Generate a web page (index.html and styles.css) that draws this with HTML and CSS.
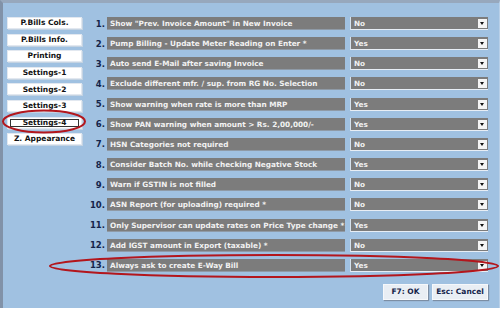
FILE: index.html
```html
<!DOCTYPE html>
<html>
<head>
<meta charset="utf-8">
<link rel="stylesheet" href="styles.css">
</head>
<body>
<div class="window">
  <div class="content">
    <div class="sidebar">
      <div class="tab">P.Bills Cols.</div>
      <div class="tab">P.Bills Info.</div>
      <div class="tab">Printing</div>
      <div class="tab">Settings-1</div>
      <div class="tab">Settings-2</div>
      <div class="tab">Settings-3</div>
      <div class="tab active"><span class="focus">Settings-4</span></div>
      <div class="tab">Z. Appearance</div>
    </div>
    <div class="main">
      <div class="rows">
        <div class="row"><span class="num">1.</span><span class="label">Show "Prev. Invoice Amount" in New Invoice</span><span class="select">No<i class="arrow"></i></span></div>
        <div class="row"><span class="num">2.</span><span class="label">Pump Billing - Update Meter Reading on Enter *</span><span class="select">Yes<i class="arrow"></i></span></div>
        <div class="row"><span class="num">3.</span><span class="label">Auto send E-Mail after saving Invoice</span><span class="select">No<i class="arrow"></i></span></div>
        <div class="row"><span class="num">4.</span><span class="label">Exclude different mfr. / sup. from RG No. Selection</span><span class="select">No<i class="arrow"></i></span></div>
        <div class="row"><span class="num">5.</span><span class="label">Show warning when rate is more than MRP</span><span class="select">Yes<i class="arrow"></i></span></div>
        <div class="row"><span class="num">6.</span><span class="label">Show PAN warning when amount &gt; Rs. 2,00,000/-</span><span class="select">Yes<i class="arrow"></i></span></div>
        <div class="row"><span class="num">7.</span><span class="label">HSN Categories not required</span><span class="select">No<i class="arrow"></i></span></div>
        <div class="row"><span class="num">8.</span><span class="label">Consider Batch No. while checking Negative Stock</span><span class="select">Yes<i class="arrow"></i></span></div>
        <div class="row"><span class="num">9.</span><span class="label">Warn if GSTIN is not filled</span><span class="select">No<i class="arrow"></i></span></div>
        <div class="row"><span class="num">10.</span><span class="label">ASN Report (for uploading) required *</span><span class="select">No<i class="arrow"></i></span></div>
        <div class="row"><span class="num">11.</span><span class="label">Only Supervisor can update rates on Price Type change *</span><span class="select">Yes<i class="arrow"></i></span></div>
        <div class="row"><span class="num">12.</span><span class="label">Add IGST amount in Export (taxable) *</span><span class="select">No<i class="arrow"></i></span></div>
        <div class="row"><span class="num">13.</span><span class="label">Always ask to create E-Way Bill</span><span class="select">Yes<i class="arrow"></i></span></div>
      </div>
      <div class="actions">
        <div class="btn ok">F7: OK</div>
        <div class="btn cancel">Esc: Cancel</div>
      </div>
    </div>
  </div>
  <svg class="mark" width="500" height="313" viewBox="0 0 500 313">
    <ellipse cx="44" cy="121.5" rx="41" ry="11" fill="none" stroke="#b3161c" stroke-width="2"/>
    <ellipse cx="274" cy="266" rx="224" ry="11" fill="none" stroke="#b3161c" stroke-width="2"/>
  </svg>
</div>
</body>
</html>
```
FILE: styles.css
```css
* { box-sizing: border-box; }
html, body { margin: 0; padding: 0; }
body {
  width: 500px;
  height: 313px;
  background: #ffffff;
  font-family: "DejaVu Sans", Verdana, sans-serif;
  overflow: hidden;
}
.window {
  position: relative;
  width: 500px;
  height: 308px;
  background: #a0c1e1;
  border-left: 3px solid #8192a8;
  border-top: 3px solid #97a8bd;
  border-right: 1px solid #b9d0e8;
}
.content {
  display: flex;
  padding-top: 14px;
}
.sidebar {
  width: 84px;
  padding-left: 4px;
  display: flex;
  flex-direction: column;
  gap: 4.6px;
}
.tab {
  width: 75px;
  height: 12px;
  background: #ffffff;
  border: 1px solid #e2e8f0;
  box-shadow: 1px 1px 0 #c4d3e2;
  font-size: 7.5px;
  font-weight: bold;
  color: #111;
  display: flex;
  align-items: center;
  justify-content: center;
  line-height: 1;
}
.tab.active {
  padding: 1px 2px;
}
.focus {
  width: 100%;
  height: 100%;
  border: 1px solid #333;
  display: flex;
  align-items: center;
  justify-content: center;
}
.main {
  display: flex;
  flex-direction: column;
}
.rows {
  display: flex;
  flex-direction: column;
  gap: 7.17px;
}
.row {
  display: flex;
  align-items: center;
  height: 13px;
}
.num {
  width: 18px;
  text-align: right;
  font-size: 8.5px;
  font-weight: bold;
  color: #14244a;
  margin-right: 1px;
}
.label {
  width: 238px;
  height: 13px;
  margin-left: 1px;
  background: #7c7c7c;
  color: #f2f2f2;
  font-size: 7.3px;
  font-weight: bold;
  line-height: 13px;
  padding-left: 3px;
  white-space: nowrap;
  overflow: hidden;
  border-bottom: 1px solid #8f9aa6;
}
.select {
  position: relative;
  width: 138px;
  height: 13px;
  margin-left: 5px;
  background: #7c7c7c;
  color: #f2f2f2;
  font-size: 7.3px;
  font-weight: bold;
  line-height: 13px;
  padding-left: 3px;
  border-bottom: 1px solid #e8eef5;
  border-left: 1px solid #d6e2ee;
}
.arrow {
  position: absolute;
  right: 1px;
  top: 2px;
  width: 9px;
  height: 9px;
  background: #f4f4f4;
}
.arrow::after {
  content: "";
  position: absolute;
  left: 2px;
  top: 3px;
  border-left: 2.5px solid transparent;
  border-right: 2.5px solid transparent;
  border-top: 3px solid #111;
}
.actions {
  display: flex;
  justify-content: flex-end;
  gap: 4px;
  margin-top: 12px;
  padding-right: 0;
}
.btn {
  height: 16px;
  background: #e9eef4;
  border: 1px solid #f6f8fb;
  box-shadow: 1px 1px 1px #7c8ea4;
  font-size: 7.5px;
  font-weight: bold;
  color: #14244a;
  display: flex;
  align-items: center;
  justify-content: center;
}
.ok { width: 45px; }
.cancel { width: 56px; }
.mark {
  position: absolute;
  left: -3px;
  top: -3px;
  pointer-events: none;
}
```
